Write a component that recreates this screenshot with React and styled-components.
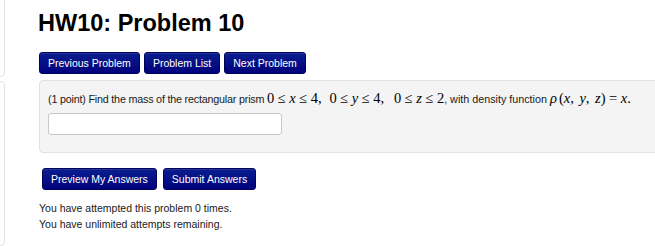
import React from 'react'
import styled, { createGlobalStyle } from 'styled-components'

const GlobalStyle = createGlobalStyle`
  html, body {
    margin: 0;
    padding: 0;
    background: #fff;
    overflow: hidden;
  }
  body {
    font-family: "Liberation Sans", Arial, sans-serif;
    color: #1a1a1a;
  }
`

const Page = styled.div`
  display: flex;
  width: 655px;
  height: 246px;
  overflow: hidden;
`

const Sidebar = styled.div`
  flex: 0 0 4px;
  display: flex;
  flex-direction: column;
  gap: 4px;
  margin-top: -6px;
`

const SideBox = styled.div`
  margin-left: -40px;
  width: 43px;
  height: ${p => p.h}px;
  border: 1px solid #e3e3e3;
  border-radius: 4px;
  background: #fff;
`

const Main = styled.div`
  flex: 1;
  padding-left: 34px;
  min-width: 0;
`

const Title = styled.h1`
  margin: 10px 0 0 -1px;
  font-size: 23.5px;
  line-height: 27px;
  font-weight: bold;
  color: #000;
`

const ButtonRow = styled.div`
  display: flex;
  gap: ${p => p.gap || 4}px;
  margin: ${p => p.margin};
`

const NavButton = styled.button`
  height: 22px;
  padding: 0 8px;
  font-family: "Liberation Sans", Arial, sans-serif;
  font-size: 10.5px;
  color: #fff;
  background: linear-gradient(to bottom, #0a1e8e, #00027c);
  border: 1px solid #00035a;
  border-radius: 3px;
  box-shadow: inset 0 1px 0 rgba(255, 255, 255, 0.1);
  white-space: nowrap;
  cursor: pointer;
`

const ProblemBox = styled.div`
  width: 640px;
  height: 73px;
  box-sizing: border-box;
  margin-top: 6px;
  padding: 9px 0 0 8px;
  background: #f4f4f4;
  border: 1px solid #e2e2e2;
  border-radius: 4px;
`

const Statement = styled.div`
  font-size: 10.75px;
  line-height: 16px;
  white-space: nowrap;
  display: flex;
  align-items: baseline;
`

const Prose = styled.span`
  letter-spacing: ${p => p.tight ? '-0.2px' : '0'};
`

const MathRun = styled.span`
  font-family: "Liberation Serif", "Times New Roman", serif;
  font-size: 14.5px;
  margin-right: ${p => p.gap || 0}px;
  color: #000;
`

const V = styled.i`
  font-style: italic;
`

const Rel = styled.span`
  margin: 0 3.5px;
`

const Sep = styled.span`
  margin-right: 2px;
`

const AnswerInput = styled.input`
  display: block;
  width: 234px;
  height: 22px;
  box-sizing: border-box;
  margin: 6px 0 0 0;
  border: 1px solid #c8c8c8;
  border-radius: 3px;
  background: #fff;
`

const Info = styled.div`
  margin-top: 10px;
  font-size: 10.5px;
  line-height: 16px;
  color: #1a1a1a;
`

const Range = ({ v, hi }) => (
  <>
    0<Rel>≤</Rel><V>{v}</V><Rel>≤</Rel>{hi},
  </>
)

export default function App() {
  return (
    <Page>
      <GlobalStyle />
      <Sidebar>
        <SideBox h={100} />
        <SideBox h={200} />
      </Sidebar>
      <Main>
        <Title>HW10: Problem 10</Title>
        <ButtonRow margin="15px 0 0 0">
          <NavButton>Previous Problem</NavButton>
          <NavButton>Problem List</NavButton>
          <NavButton>Next Problem</NavButton>
        </ButtonRow>
        <ProblemBox>
          <Statement>
            <Prose tight>(1 point) Find the mass of the rectangular prism&nbsp;</Prose>
            <MathRun gap={8}><Range v="x" hi="4" /></MathRun>
            <MathRun gap={10}><Range v="y" hi="4" /></MathRun>
            <MathRun>0<Rel>≤</Rel><V>z</V><Rel>≤</Rel>2</MathRun>
            <Prose>, with density function&nbsp;</Prose>
            <MathRun>
              <V>ρ</V><Sep />(<V>x</V>,<Sep> </Sep><V>y</V>,<Sep> </Sep><V>z</V>)<Rel>=</Rel><V>x</V>.
            </MathRun>
          </Statement>
          <AnswerInput type="text" />
        </ProblemBox>
        <ButtonRow gap={6} margin="15px 0 0 3px">
          <NavButton>Preview My Answers</NavButton>
          <NavButton>Submit Answers</NavButton>
        </ButtonRow>
        <Info>
          You have attempted this problem 0 times.<br />
          You have unlimited attempts remaining.
        </Info>
      </Main>
    </Page>
  )
}
